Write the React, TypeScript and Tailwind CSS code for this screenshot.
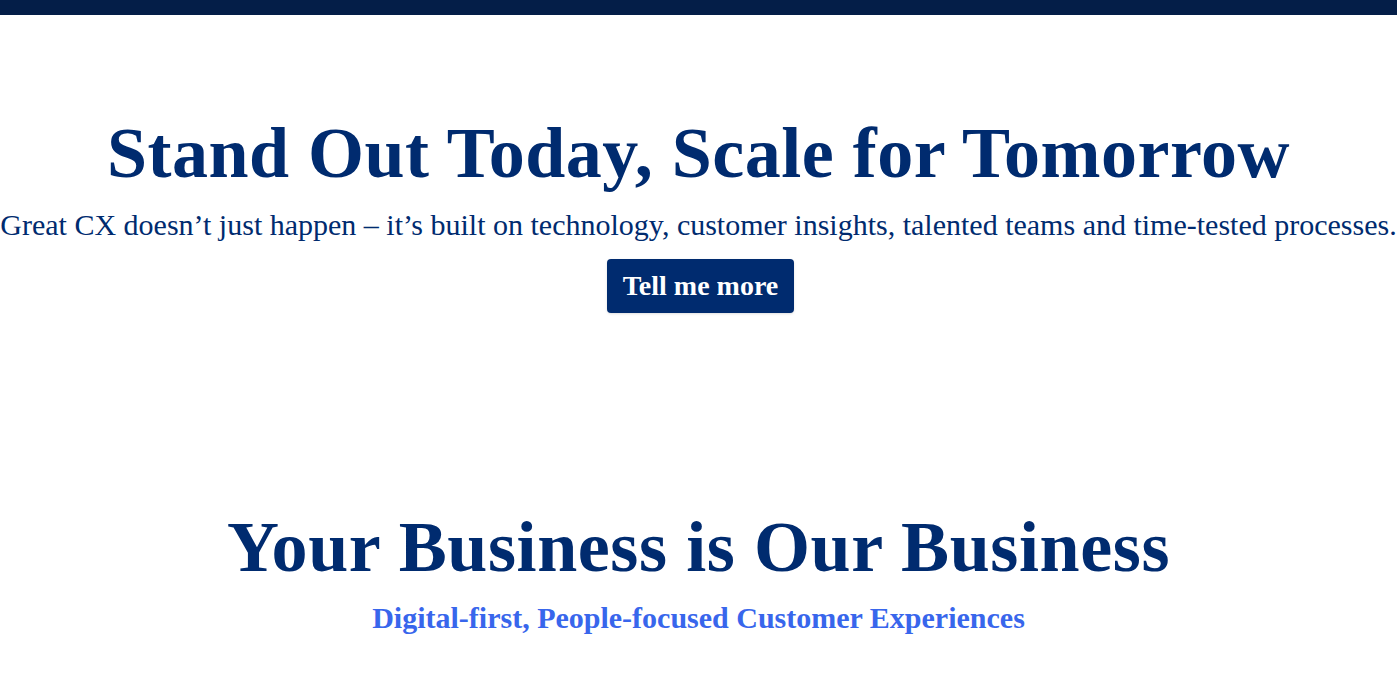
export default function App() {
  return (
    <div className="min-h-screen bg-white font-['Liberation_Serif','Times_New_Roman',serif]">
      <div className="h-[15px] bg-[#041e48]" />

      <section className="flex flex-col items-center pt-[95px] text-center">
        <h1 className="text-[72px] font-bold leading-[86px] tracking-[0.5px] text-[#002b6f]">
          Stand Out Today, Scale for Tomorrow
        </h1>
        <p className="mt-[11px] whitespace-nowrap text-[30px] leading-[36px] text-[#002b6f]">
          Great CX doesn’t just happen – it’s built on technology, customer insights, talented teams and time-tested processes.
        </p>
        <button className="ml-1 mt-[16px] h-[54px] w-[187px] rounded-[4px] bg-[#002b6f] text-[28px] font-bold text-white shadow-sm">
          Tell me more
        </button>
      </section>

      <section className="flex flex-col items-center pt-[191px] text-center">
        <h2 className="text-[72px] font-bold leading-[86px] tracking-[0.6px] text-[#002b6f]">
          Your Business is Our Business
        </h2>
        <p className="mt-[10px] text-[30px] font-bold leading-[36px] text-[#3866ec]">
          Digital-first, People-focused Customer Experiences
        </p>
      </section>
    </div>
  );
}
